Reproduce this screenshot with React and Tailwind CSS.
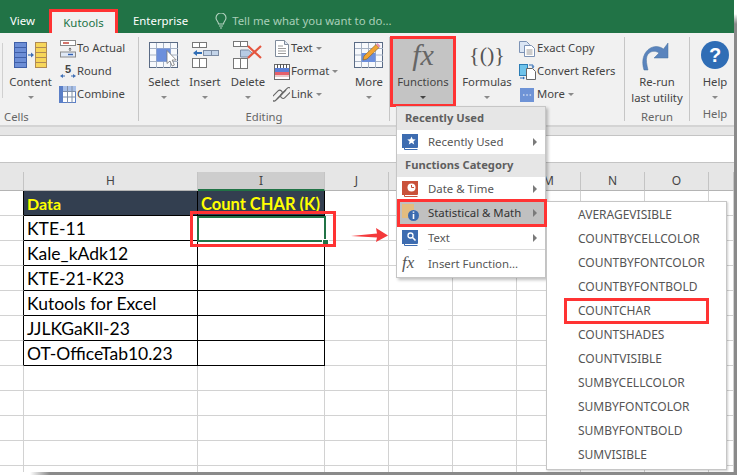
import React from 'react';

const GRID_COLS = [24, 174, 127, 64, 64, 64, 64, 64, 64, 25];
const TABLE_ROWS = ['KTE-11', 'Kale_kAdk12', 'KTE-21-K23', 'Kutools for Excel', 'JJLKGaKIl-23', 'OT-OfficeTab10.23'];
const SUB_ITEMS = ['AVERAGEVISIBLE', 'COUNTBYCELLCOLOR', 'COUNTBYFONTCOLOR', 'COUNTBYFONTBOLD', 'COUNTCHAR', 'COUNTSHADES', 'COUNTVISIBLE', 'SUMBYCELLCOLOR', 'SUMBYFONTCOLOR', 'SUMBYFONTBOLD', 'SUMVISIBLE'];

function Caret({ dark }) {
  return <span className={`block w-0 h-0 border-x-[3.5px] border-x-transparent border-t-[3.5px] ${dark ? 'border-t-[#444]' : 'border-t-[#8a8a8a]'}`} />;
}

function LargeButton({ w, label, children, ml, caret = true, dark }) {
  return (
    <div className={`flex flex-col items-center pt-1 shrink-0 ${w} ${ml}`}>
      <div className="h-7 flex items-center justify-center">{children}</div>
      <div className="h-[18px] mt-[4px] leading-[18px] whitespace-nowrap">{label}</div>
      {caret && <div className="h-3 flex items-center"><Caret dark={dark} /></div>}
    </div>
  );
}

function SmallButton({ icon, label, caret, iconW = 'w-[19px]' }) {
  return (
    <div className="h-[23px] flex items-center whitespace-nowrap">
      <div className={`flex justify-center shrink-0 ${iconW}`}>{icon}</div>
      <span>{label}</span>
      {caret && <span className="ml-[3px]"><Caret /></span>}
    </div>
  );
}

function ContentIcon() {
  const rows = [0, 1, 2, 3, 4];
  return (
    <svg width="33" height="26" viewBox="0 0 33 26">
      {rows.map((r) => <rect key={r} x="0.5" y={0.5 + r * 5} width="12" height="5" fill="#6d8ed6" stroke="#3f5fa8" />)}
      {rows.map((r) => <rect key={r} x="21.5" y={0.5 + r * 5} width="11" height="5" fill="#f7d65a" stroke="#b08a55" />)}
      <path d="M14 13h4" stroke="#3f6fb5" strokeWidth="1.2" />
      <path d="M17 10.5l3 2.5-3 2.5z" fill="#3f6fb5" />
    </svg>
  );
}

function ToActualIcon() {
  return (
    <svg width="16" height="18" viewBox="0 0 16 18">
      <rect x="0.5" y="0.5" width="15" height="5" fill="#fff" stroke="#8a8a8a" />
      <path d="M3 3h6" stroke="#c0392b" strokeWidth="1.4" />
      <path d="M10 7.5l-1.6 2h3.2zM9.5 9h1v2h-1z" fill="#555" />
      <rect x="0.5" y="12" width="15" height="5" fill="#dfe8f5" stroke="#8a8a8a" />
      <path d="M8 14.5h5" stroke="#2f5fb3" strokeWidth="1.4" />
    </svg>
  );
}

function RoundIcon() {
  return (
    <svg width="18" height="18" viewBox="0 0 18 18">
      <text x="9" y="10" textAnchor="middle" fontSize="11" fontWeight="700" fontFamily="Liberation Sans, sans-serif" fill="#444">5</text>
      <path d="M1 13l3-2v4zM17 13l-3-2v4z" fill="#3f6fb5" />
      <path d="M4 13h2M12 13h2" stroke="#3f6fb5" />
    </svg>
  );
}

function CombineIcon() {
  return (
    <svg width="17" height="17" viewBox="0 0 17 17">
      <rect x="0.5" y="0.5" width="16" height="16" fill="#fff" stroke="#5b7fc7" />
      <rect x="0" y="0" width="4" height="17" fill="#5b7fc7" />
      <rect x="4" y="0" width="13" height="5" fill="#a9c0e8" />
      <path d="M4 5.5h13M4 11h13M8.5 0v17M13 0v17" stroke="#7f8fa8" />
    </svg>
  );
}

function SelectIcon() {
  return (
    <svg width="30" height="27" viewBox="0 0 30 27">
      <rect x="0.5" y="0.5" width="28" height="25" fill="#f7f9fc" stroke="#5a6b85" />
      <path d="M7.5 1v25M14.5 1v25M21.5 1v25M1 6.5h28M1 13h28M1 19.5h28" stroke="#a6b2c4" />
      <rect x="7.5" y="6.5" width="14" height="13" fill="#6c8fdc" />
      <path d="M18 8.5v13l3-2.5 2.2 5 2.2-1-2.2-5h4z" fill="#fff" stroke="#777" strokeWidth="0.8" />
    </svg>
  );
}

function InsertIcon() {
  return (
    <svg width="27" height="27" viewBox="0 0 27 27">
      <g fill="#fff" stroke="#777">
        <rect x="0.5" y="0.5" width="7" height="5" />
        <rect x="7.5" y="0.5" width="7" height="5" />
        <rect x="0.5" y="16.5" width="7" height="9" />
        <rect x="7.5" y="16.5" width="7" height="9" />
      </g>
      <rect x="11.5" y="8.5" width="8" height="5" fill="#c3d4e9" stroke="#7b8ba3" />
      <rect x="19.5" y="8.5" width="7" height="5" fill="#c3d4e9" stroke="#7b8ba3" />
      <path d="M1 11l4-3v2h5v2H5v2z" fill="#2f6db5" />
    </svg>
  );
}

function DeleteIcon() {
  return (
    <svg width="30" height="28" viewBox="0 0 30 28">
      <g fill="#fff" stroke="#777">
        <rect x="0.5" y="0.5" width="7" height="5" />
        <rect x="7.5" y="0.5" width="7" height="5" />
        <rect x="0.5" y="17.5" width="7" height="10" />
        <rect x="7.5" y="17.5" width="7" height="10" />
      </g>
      <path d="M7.5 9h8l4 3.5-4 3.5h-8z" fill="#b7cbe4" stroke="#7b8ba3" />
      <path d="M15 5l13 12M28 5L15 17" stroke="#e5563f" strokeWidth="2.2" />
    </svg>
  );
}

function TextIcon() {
  return (
    <svg width="14" height="17" viewBox="0 0 14 17">
      <path d="M0.5 0.5h9l4 4v12h-13z" fill="#fff" stroke="#7f8b9b" />
      <path d="M9.5 0.5v4h4" fill="#dbe3ee" stroke="#7f8b9b" />
      <path d="M3 6h5M3 8.5h8M3 11h8M3 13.5h8" stroke="#9a9a9a" />
    </svg>
  );
}

function FormatIcon() {
  return (
    <svg width="16" height="16" viewBox="0 0 16 16">
      <rect x="0.5" y="0.5" width="15" height="15" fill="#fff" stroke="#6c6c6c" />
      <path d="M3.5 0v4M6.5 0v4M9.5 0v4M12.5 0v4" stroke="#555" />
      <rect x="1" y="4" width="14" height="4" fill="#5b7fd6" />
      <rect x="1" y="8" width="14" height="3" fill="#e5606b" />
      <rect x="1" y="11" width="14" height="2" fill="#e9c9c9" />
    </svg>
  );
}

function LinkIcon() {
  return (
    <svg width="17" height="17" viewBox="0 0 17 17" fill="none" stroke="#666" strokeWidth="1.1">
      <rect x="-2.6" y="7" width="13" height="5" rx="2.4" transform="rotate(-45 4 9.5)" />
      <rect x="6.5" y="4.5" width="13" height="5" rx="2.4" transform="rotate(-45 13 7)" />
      <path d="M4 13L13 4" />
    </svg>
  );
}

function MoreGridIcon() {
  return (
    <svg width="30" height="27" viewBox="0 0 30 27">
      <rect x="0.5" y="0.5" width="28" height="25" fill="#f7f9fc" stroke="#5a6b85" />
      <path d="M7.5 1v25M14.5 1v25M21.5 1v25M1 6.5h28M1 13h28M1 19.5h28" stroke="#a6b2c4" />
      <rect x="7.5" y="11" width="14" height="9" fill="#6c8fdc" />
      <path d="M9 18l1-4L22 2.500l3 3L13 17z" fill="#f3a431" stroke="#8a6a2e" strokeWidth="0.7" />
      <path d="M22 2.500l1.500-1.500 3 3-1.500 1.500z" fill="#e58fb0" />
    </svg>
  );
}

function ExactCopyIcon() {
  return (
    <svg width="16" height="16" viewBox="0 0 16 16">
      <path d="M0.5 0.5h7l3 3v8h-10z" fill="#dbe6f4" stroke="#7d93b5" />
      <path d="M5.5 4.500h7l3 3v8h-10z" fill="#fff" stroke="#7d93b5" />
      <path d="M7.500 9h6M7.500 11h6M7.500 13h6" stroke="#9a9a9a" />
    </svg>
  );
}

function ConvertIcon() {
  return (
    <svg width="17" height="17" viewBox="0 0 17 17">
      <rect x="0.5" y="1.500" width="8" height="11" fill="#6fc3ea" stroke="#2b7db5" />
      <path d="M7.500 5.500h6l3 3v8h-9z" fill="#fff" stroke="#666" />
      <path d="M10 2h4v2M1 15h4" fill="none" stroke="#2f6db5" />
      <path d="M12.500 3.500l1.500 2 1.500-2zM4 13.500l2 1.500-2 1.500z" fill="#2f6db5" />
    </svg>
  );
}

function MoreDotsIcon() {
  return (
    <svg width="14" height="14" viewBox="0 0 14 14">
      <rect width="14" height="14" fill="#6e93d6" />
      <path d="M3 7h1.500M6.300 7h1.500M9.600 7h1.500" stroke="#fff" />
    </svg>
  );
}

function RerunIcon() {
  return (
    <svg width="31" height="30" viewBox="0 0 31 30">
      <path d="M3 29C-1 17 5 6 15 5.500c3 0 5.500 1 7.500 2.500L27 2v15H13l5-5c-4-3-10-2-12 3-1.500 4 0 9 1 14z" fill="#5a84bd" stroke="#47709f" strokeWidth="0.5" />
    </svg>
  );
}

function HelpIcon() {
  return (
    <svg width="28" height="28" viewBox="0 0 28 28">
      <circle cx="14" cy="14" r="14" fill="#2f6db5" />
      <text x="14" y="21" textAnchor="middle" fontSize="20" fontWeight="700" fontFamily="Liberation Sans, sans-serif" fill="#fff">?</text>
    </svg>
  );
}

function BookIcon({ color, children, faded }) {
  return (
    <svg width="16" height="16" viewBox="0 0 16 16">
      <path d="M0.500 0.500h15v13h-13v2h13" fill="none" stroke={color} />
      <rect x="0" y="0" width="3" height="14" fill={color} />
      <rect x="3" y="0" width="13" height="13" fill={color} opacity={faded ? 0.5 : 1} />
      {children}
    </svg>
  );
}

function Bulb() {
  return (
    <svg width="12" height="16" viewBox="0 0 12 16" fill="none" stroke="#b5d3c1" strokeWidth="1.1">
      <path d="M3.500 11C3.500 8.500 1 7.500 1 5a5 5 0 0 1 10 0c0 2.500-2.500 3.500-2.500 6z" />
      <path d="M4 13h4M5 15h2" />
    </svg>
  );
}

function Arrow() {
  return <span className="block w-0 h-0 border-y-[4px] border-y-transparent border-l-[4px] border-l-[#7a7a7a]" />;
}

function MenuHeader({ children }) {
  return <div className="h-[23px] bg-[#e6e6e6] pl-[8px] flex items-center font-bold text-[#5f5f5f] text-[11.2px]">{children}</div>;
}

function MenuItem({ icon, label, arrow = true, h = 'h-[24px]', active }) {
  return (
    <div className={`${h} flex items-center relative ${active ? 'bg-[#c0c0c0] text-[#333]' : ''}`}>
      <div className="w-[31px] pl-[5px] shrink-0">{icon}</div>
      <span className="whitespace-nowrap">{label}</span>
      {arrow && <span className="ml-auto mr-[8px]"><Arrow /></span>}
    </div>
  );
}

function Ribbon() {
  return (
    <div className="h-[92px] bg-[#f1f1f1] flex pt-1 text-[11.3px] text-[#444] relative">
      <div className="w-[139px] h-[84px] border-r border-[#c6c6c6] flex flex-col shrink-0">
        <div className="flex h-[69px]">
          <div className="w-px h-[55px] mt-[6px] ml-[2px] bg-[#d0d0d0]" />
          <LargeButton w="w-[43px]" ml="ml-[6px]" label="Content"><ContentIcon /></LargeButton>
          <div className="ml-[6px]">
            <SmallButton icon={<ToActualIcon />} label="To Actual" />
            <SmallButton icon={<RoundIcon />} label="Round" />
            <SmallButton icon={<CombineIcon />} label="Combine" />
          </div>
        </div>
        <div className="pl-[4px] mt-[4px] leading-[14px] text-[#666]">Cells</div>
      </div>

      <div className="w-[251px] h-[84px] border-r border-[#c6c6c6] flex flex-col shrink-0">
        <div className="flex h-[69px]">
          <LargeButton w="w-[36px]" ml="ml-[7px]" label="Select"><SelectIcon /></LargeButton>
          <LargeButton w="w-[34px]" ml="ml-[6px]" label="Insert"><InsertIcon /></LargeButton>
          <LargeButton w="w-[36px]" ml="ml-[8px]" label="Delete"><DeleteIcon /></LargeButton>
          <div className="w-[74px] ml-[6px] shrink-0">
            <SmallButton icon={<TextIcon />} label="Text" caret />
            <SmallButton icon={<FormatIcon />} label="Format" caret />
            <SmallButton icon={<LinkIcon />} label="Link" caret />
          </div>
          <LargeButton w="w-[36px]" ml="ml-[5px]" label="More"><MoreGridIcon /></LargeButton>
        </div>
        <div className="text-center mt-[4px] leading-[14px] text-[#666]">Editing</div>
      </div>

      <div className="w-[235px] h-[84px] border-r border-[#c6c6c6] flex shrink-0 items-start">
        <div className="w-[66px] h-[71px] -mt-px border-[3px] border-[#ff3333] bg-[#c4c4c4] flex flex-col items-center pt-[2px] shrink-0 z-10">
          <div className="h-7 flex items-center font-['Liberation_Serif',serif] italic text-[30px] text-[#666] leading-none">fx</div>
          <div className="h-[18px] mt-[4px] leading-[18px]">Functions</div>
          <div className="h-3 flex items-center"><Caret dark /></div>
        </div>
        <LargeButton w="w-[50px]" ml="ml-[6px]" label="Formulas">
          <span className="font-['Liberation_Serif',serif] text-[22px] text-[#555] leading-none">{'{()}'}</span>
        </LargeButton>
        <div className="ml-[5px] shrink-0">
          <SmallButton iconW="w-[20px]" icon={<ExactCopyIcon />} label="Exact Copy" />
          <SmallButton iconW="w-[20px]" icon={<ConvertIcon />} label="Convert Refers" />
          <SmallButton iconW="w-[20px]" icon={<MoreDotsIcon />} label="More" caret />
        </div>
      </div>

      <div className="w-[65px] h-[84px] border-r border-[#c6c6c6] flex flex-col items-center shrink-0">
        <div className="h-[69px] flex flex-col items-center pt-1">
          <div className="h-[31px]"><RerunIcon /></div>
          <div className="h-[16px] mt-[2px] leading-[16px]">Re-run</div>
          <div className="h-[16px] leading-[16px] whitespace-nowrap">last utility</div>
        </div>
        <div className="mt-[4px] leading-[14px] text-[#666]">Rerun</div>
      </div>

      <div className="w-[44px] h-[84px] pl-[6px] flex flex-col items-center shrink-0">
        <div className="h-[69px]">
          <LargeButton w="w-[38px]" label="Help"><HelpIcon /></LargeButton>
        </div>
        <div className="mt-[4px] leading-[14px] text-[#666]">Help</div>
      </div>
    </div>
  );
}

function SheetCell({ col, row }) {
  const inTable = row >= 0 && row < 7 && (col === 1 || col === 2);
  const isHead = row === 0 && inTable;
  const text = col === 1 && row > 0 && row < 7 ? TABLE_ROWS[row - 1] : null;
  const blackRight = (inTable || (col === 0 && row < 7)) ? 'border-r-black' : 'border-r-[#d2d2d2]';
  const blackBottom = inTable ? 'border-b-black' : 'border-b-[#d2d2d2]';
  return (
    <div className={`border-r border-b ${blackRight} ${blackBottom} ${isHead ? 'bg-[#333f50] text-[#ffff00] font-bold' : 'text-black text-[17.5px]'} flex items-center pl-[3px] pt-[2px] whitespace-nowrap overflow-hidden`}>
      {text}
      {isHead && col === 1 && <span className="text-[16px]">Data</span>}
      {isHead && col === 2 && <span className="text-[16.5px]">Count CHAR (K)</span>}
    </div>
  );
}

function Sheet() {
  const rows = [0, 1, 2, 3, 4, 5, 6, 7, 8, 9, 10, 11];
  return (
    <div className="relative">
      <div className="h-[29px] bg-[#e6e6e6] border-t border-[#c4c4c4] flex items-end text-[12px] text-[#444]">
        {['', 'H', 'I', 'J', '', '', 'M', 'N', 'O', ''].map((c, i) => (
          <div
            key={i}
            style={{ width: GRID_COLS[i] }}
            className={`h-[19px] flex items-center justify-center border-r border-[#c4c4c4] shrink-0 ${i === 2 ? 'bg-[#cdcdcd] border-b-2 border-b-[#217346]' : 'border-b border-b-[#b4b4b4]'}`}
          >
            {c}
          </div>
        ))}
      </div>
      <div className="grid font-['Lato',sans-serif] grid-cols-[24px_174px_127px_64px_64px_64px_64px_64px_64px_25px] auto-rows-[25px] h-[281px] overflow-hidden">
        {rows.map((r) => GRID_COLS.map((_, c) => <SheetCell key={`${r}-${c}`} col={c} row={r} />))}
      </div>

      {/* active cell + call-out frame */}
      <div className="absolute left-[197px] top-[54px] w-[129px] h-[26px] border-2 border-[#217346]" />
      <div className="absolute left-[322px] top-[77px] w-[5px] h-[5px] bg-[#217346] border border-white box-content" />
      <div className="absolute left-[190px] top-[49px] w-[146px] h-[36px] border-[3px] border-[#ff3333]" />
      <svg className="absolute left-[351px] top-[66px]" width="38" height="15" viewBox="0 0 38 15">
        <path d="M0 8L26 5.500 25 0l12 7.500L25 14l1-4.500z" fill="#f4393b" />
      </svg>
    </div>
  );
}

export default function App() {
  return (
    <div className="w-[737px] h-[475px] bg-white overflow-hidden font-['Noto_Sans',sans-serif]">
      <div className="flex h-[472px]">
        <div className="w-[734px] relative shrink-0 flex flex-col">
          <div className="h-[33px] bg-[#217346] flex items-end text-[11.4px] text-white shrink-0">
            <div className="w-[49px] pl-[10px] h-[24px] flex items-center">View</div>
            <div className="w-[69px] h-[24px] bg-[#f1f1f1] border-[3px] border-b-0 border-[#ff3333] text-[#217346] flex items-center justify-center">Kutools</div>
            <div className="ml-[15px] h-[24px] flex items-center">Enterprise</div>
            <div className="ml-[27px] h-[24px] flex items-center"><Bulb /></div>
            <div className="ml-[5px] h-[24px] flex items-center text-[#a9cfb9]">Tell me what you want to do...</div>
          </div>
          <Ribbon />
          <div className="h-[10px] bg-[#e6e6e6] border-t-2 border-[#d4d4d4] shrink-0" />
          <div className="h-[27px] bg-white border-t border-[#c4c4c4] shrink-0" />
          <Sheet />

          <div className="absolute left-[396px] top-[106px] w-[150px] bg-white border border-[#c6c6c6] shadow-[2px_2px_3px_rgba(0,0,0,0.25)] text-[11.4px] text-[#555] z-20">
            <MenuHeader>Recently Used</MenuHeader>
            <MenuItem icon={<BookIcon color="#3d6cb0"><path d="M9.500 2.500l1.200 2.800 3 .2-2.300 1.900.8 3-2.700-1.700-2.700 1.700.8-3-2.300-1.900 3-.2z" fill="#fff" /></BookIcon>} label="Recently Used" />
            <MenuHeader>Functions Category</MenuHeader>
            <MenuItem h="h-[23px]" icon={<BookIcon color="#c9513a"><circle cx="9.500" cy="6.500" r="4" fill="#fff" /><path d="M9.500 4v2.500H12" stroke="#c9513a" fill="none" /></BookIcon>} label="Date & Time" />
            <MenuItem h="h-[26px]" active icon={(
              <svg width="18" height="18" viewBox="0 0 18 18">
                <rect x="0" y="0" width="12" height="14" fill="#e3bd80" />
                <circle cx="11.500" cy="11.500" r="5.500" fill="#3d6cb0" />
                <path d="M11.500 7.500v1.300M11.500 10v5" stroke="#fff" strokeWidth="1.600" />
              </svg>
            )} label="Statistical & Math" />
            <MenuItem h="h-[23px]" icon={<BookIcon color="#3d6cb0"><circle cx="8.500" cy="5.500" r="2.500" fill="none" stroke="#fff" strokeWidth="1.300" /><path d="M10.500 7.500l3 3" stroke="#fff" strokeWidth="1.600" /></BookIcon>} label="Text" />
            <div className="h-px bg-[#dcdcdc] ml-[31px]" />
            <MenuItem h="h-[27px]" arrow={false} icon={<span className="font-['Liberation_Serif',serif] italic text-[17px] text-[#555] leading-none">fx</span>} label="Insert Function..." />
          </div>
          <div className="absolute left-[397px] top-[199px] w-[150px] h-[28px] border-[3px] border-[#ff3333] z-30" />

          <div className="absolute left-[546px] top-[201px] w-[181px] bg-white border border-[#c6c6c6] shadow-[1px_1px_2px_rgba(0,0,0,0.2)] pt-[1px] pb-[2px] pl-[31px] text-[12px] text-[#555] z-20">
            {SUB_ITEMS.map((s) => <div key={s} className="h-[24px] flex items-center">{s}</div>)}
          </div>
          <div className="absolute left-[564px] top-[298px] w-[145px] h-[26px] border-[3px] border-[#ff3333] z-30" />
        </div>
        <div className="w-[3px] mt-[14px] bg-gradient-to-b from-white to-[#8a8a8a] to-[10px] shrink-0" />
      </div>
      <div className="h-[3px] ml-[30px] bg-gradient-to-r from-white to-[#8a8a8a] to-[20px]" />
    </div>
  );
}
